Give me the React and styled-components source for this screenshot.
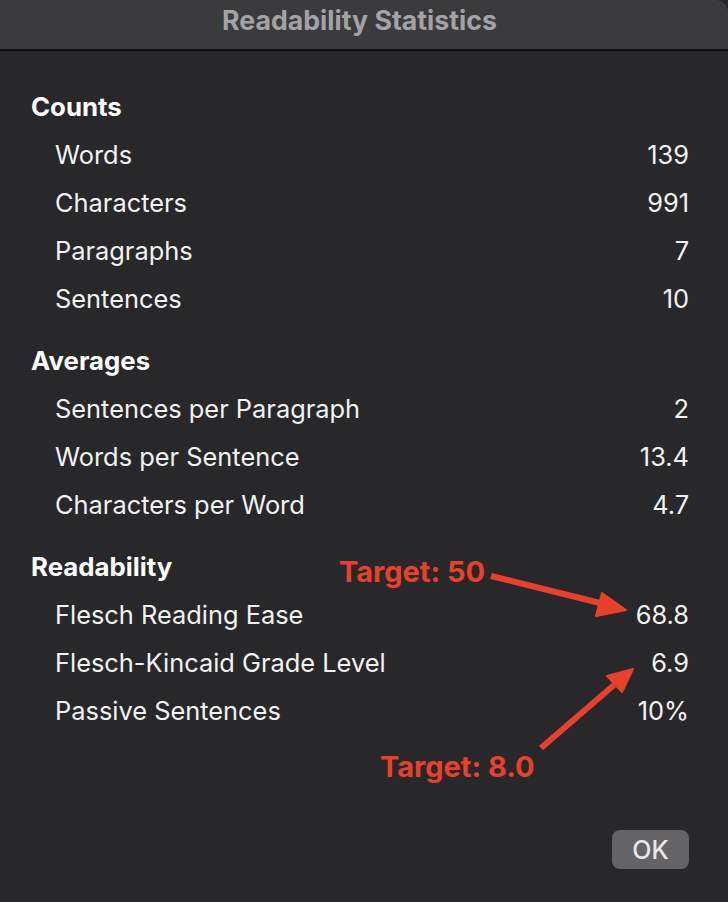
import styled, { createGlobalStyle } from "styled-components";

const Global = createGlobalStyle`
  html, body {
    margin: 0;
    padding: 0;
    background: #28282a;
  }
  body {
    font-family: Inter, "Noto Sans", sans-serif;
    -webkit-font-smoothing: antialiased;
  }
`;

const Window = styled.div`
  width: 728px;
  height: 902px;
  background: #28282a;
  display: flex;
  flex-direction: column;
  position: relative;
  overflow: hidden;
`;

const TitleBar = styled.div`
  box-sizing: border-box;
  height: 51px;
  padding: 0 9px 9px 0;
  background: #3b3b3d;
  border-bottom: 2px solid #121213;
  display: flex;
  align-items: center;
  justify-content: center;
  color: #a3a3a5;
  font-weight: 700;
  font-size: 26.7px;
  border-top-right-radius: 12px;
`;

const Body = styled.div`
  flex: 1;
  padding: 38px 39px 0 31px;
  display: flex;
  flex-direction: column;
`;

const Section = styled.section`
  display: flex;
  flex-direction: column;
  margin-bottom: 14px;
`;

const Heading = styled.h2`
  margin: 0;
  height: 48px;
  line-height: 36px;
  font-size: 25.8px;
  font-weight: 700;
  color: #ffffff;
`;

const Row = styled.div`
  display: flex;
  justify-content: space-between;
  height: 48px;
  line-height: 36px;
  padding-left: 24px;
  font-size: 25.4px;
  color: #f2f2f2;
`;

const Footer = styled.div`
  display: flex;
  justify-content: flex-end;
  margin-top: auto;
  padding-bottom: 33px;
`;

const OkButton = styled.button`
  width: 77px;
  height: 39px;
  border: none;
  border-radius: 8px;
  background: #646466;
  color: #e8e8e8;
  font-family: Inter, sans-serif;
  font-size: 25px;
  font-weight: 500;
  padding: 0;
`;

const Note = styled.div`
  position: absolute;
  left: ${(p) => p.x}px;
  top: ${(p) => p.y}px;
  color: #e8412b;
  font-size: 29px;
  font-weight: 700;
  line-height: 1;
`;

const Arrows = styled.svg`
  position: absolute;
  left: 0;
  top: 0;
  pointer-events: none;
`;

const sections = [
  {
    title: "Counts",
    rows: [
      ["Words", "139"],
      ["Characters", "991"],
      ["Paragraphs", "7"],
      ["Sentences", "10"],
    ],
  },
  {
    title: "Averages",
    rows: [
      ["Sentences per Paragraph", "2"],
      ["Words per Sentence", "13.4"],
      ["Characters per Word", "4.7"],
    ],
  },
  {
    title: "Readability",
    rows: [
      ["Flesch Reading Ease", "68.8"],
      ["Flesch-Kincaid Grade Level", "6.9"],
      ["Passive Sentences", "10%"],
    ],
  },
];

const App = () => {
  return (
    <Window>
      <Global />
      <TitleBar>Readability Statistics</TitleBar>
      <Body>
        {sections.map((s) => (
          <Section key={s.title}>
            <Heading>{s.title}</Heading>
            {s.rows.map(([label, value]) => (
              <Row key={label}>
                <span>{label}</span>
                <span>{value}</span>
              </Row>
            ))}
          </Section>
        ))}
        <Footer>
          <OkButton>OK</OkButton>
        </Footer>
      </Body>

      <Note x={339} y={557}>Target: 50</Note>
      <Note x={380} y={752}>Target: 8.0</Note>
      <Arrows width="728" height="902" viewBox="0 0 728 902">
        <g fill="#e8412b" stroke="#e8412b">
          <line x1="491" y1="576" x2="604" y2="604" strokeWidth="6" />
          <polygon points="626,610 596,616 602,593" strokeWidth="2" strokeLinejoin="round" />
          <line x1="541" y1="748" x2="614" y2="685" strokeWidth="6" />
          <polygon points="633,669 622,692 607,676" strokeWidth="2" strokeLinejoin="round" />
        </g>
      </Arrows>
    </Window>
  );
};

export default App;
